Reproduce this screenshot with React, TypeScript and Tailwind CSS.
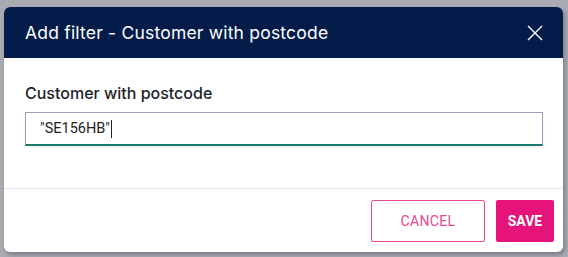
import React from 'react';

const App: React.FC = () => {
  return (
    <div
      className="w-[568px] h-[257px] bg-[#a9abb3] pt-[7px] pl-[4px]"
      style={{ fontFamily: 'Roboto, "Liberation Sans", sans-serif' }}
    >
      <div className="w-[559px] h-[245px] bg-white rounded-[6px] overflow-hidden shadow-[2px_3px_4px_rgba(0,0,0,0.25)] flex flex-col">
        <div className="h-[51px] bg-[#031c4a] flex items-center justify-between pl-[21px] pr-[20px]">
          <h2 className="text-white text-[17.5px] leading-none font-[Inter,sans-serif] tracking-[0.2px]">
            Add filter - Customer with postcode
          </h2>
          <button className="text-white">
            <svg width="16" height="16" viewBox="0 0 16 16" fill="none" stroke="currentColor" strokeWidth="1.4">
              <path d="M1 1L15 15M15 1L1 15" />
            </svg>
          </button>
        </div>
        <div className="px-[21px] pt-[27px] h-[131px] border-b border-[#e3e5ea]">
          <label className="block text-[16px] font-medium text-[#1b1f2a] leading-none font-[Inter,sans-serif]">
            Customer with postcode
          </label>
          <div className="mt-[11px] h-[34px] w-[518px] border border-[#9aa3bd] border-b-2 border-b-[#1b7a6a] flex items-center pl-[14px] shadow-[0_2px_3px_rgba(0,0,0,0.06)]">
            <span className="text-[14.5px] text-[#222]">"SE156HB"</span>
            <span className="w-px h-[18px] bg-[#222] ml-px" />
          </div>
        </div>
        <div className="flex justify-end gap-[11px] pt-[11px] pr-[9px]">
          <button className="w-[114px] h-[42px] border border-[#e8478f] rounded-[2px] text-[#e8478f] text-[14px] tracking-wide">
            CANCEL
          </button>
          <button className="w-[58px] h-[42px] bg-[#e6137a] rounded-[2px] text-white text-[14px] font-bold">
            SAVE
          </button>
        </div>
      </div>
    </div>
  );
};

export default App;
